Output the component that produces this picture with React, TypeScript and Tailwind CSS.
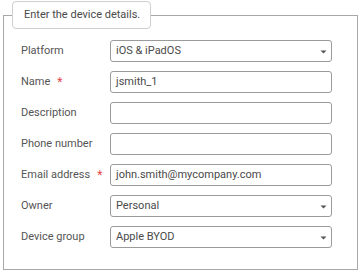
import React from "react";

const font = { fontFamily: "Roboto, 'Noto Sans', sans-serif" };

function Arrow() {
  return (
    <svg width="7" height="4" viewBox="0 0 7 4" className="absolute right-[4px] top-[9px]">
      <path d="M0.5 0.5 L6.5 0.5 L3.5 3.5 Z" fill="#555" />
    </svg>
  );
}

function Row({
  label,
  required,
  value,
  select,
}: {
  label: string;
  required?: boolean;
  value?: string;
  select?: boolean;
}) {
  return (
    <div className="flex items-center h-[22px]">
      <div className="w-[89px] shrink-0 text-[11px] text-[#555] flex items-center whitespace-nowrap">
        <span>{label}</span>
        {required && <span className="ml-[7px] text-[#e5474b] text-[12px]">*</span>}
      </div>
      <div className="relative w-[222px] h-[22px] border border-[#9a9a9a] rounded-[3px] bg-white flex items-center pl-[5px] text-[11px] text-[#4a4a4a] whitespace-nowrap">
        <span>{value}</span>
        {select && <Arrow />}
      </div>
    </div>
  );
}

export default function App() {
  return (
    <div className="w-[360px] h-[272px] bg-white pl-[3px] pt-[1px]" style={font}>
      <fieldset className="w-[355px] h-[269px] border border-[#a8a8a8] pl-[17px] pr-0 pb-0">
        <legend className="ml-[-9px] w-[139px] h-[28px] px-[11px] border border-[#cfcfcf] rounded-[4px] bg-white text-[11px] text-[#4a4a4a] flex items-center whitespace-nowrap">
          Enter the device details.
        </legend>
        <div className="flex flex-col gap-[9px] pt-[11px]">
          <Row label="Platform" value="iOS & iPadOS" select />
          <Row label="Name" required value="jsmith_1" />
          <Row label="Description" />
          <Row label="Phone number" />
          <Row label="Email address" required value="john.smith@mycompany.com" />
          <Row label="Owner" value="Personal" select />
          <Row label="Device group" value="Apple BYOD" select />
        </div>
      </fieldset>
    </div>
  );
}
